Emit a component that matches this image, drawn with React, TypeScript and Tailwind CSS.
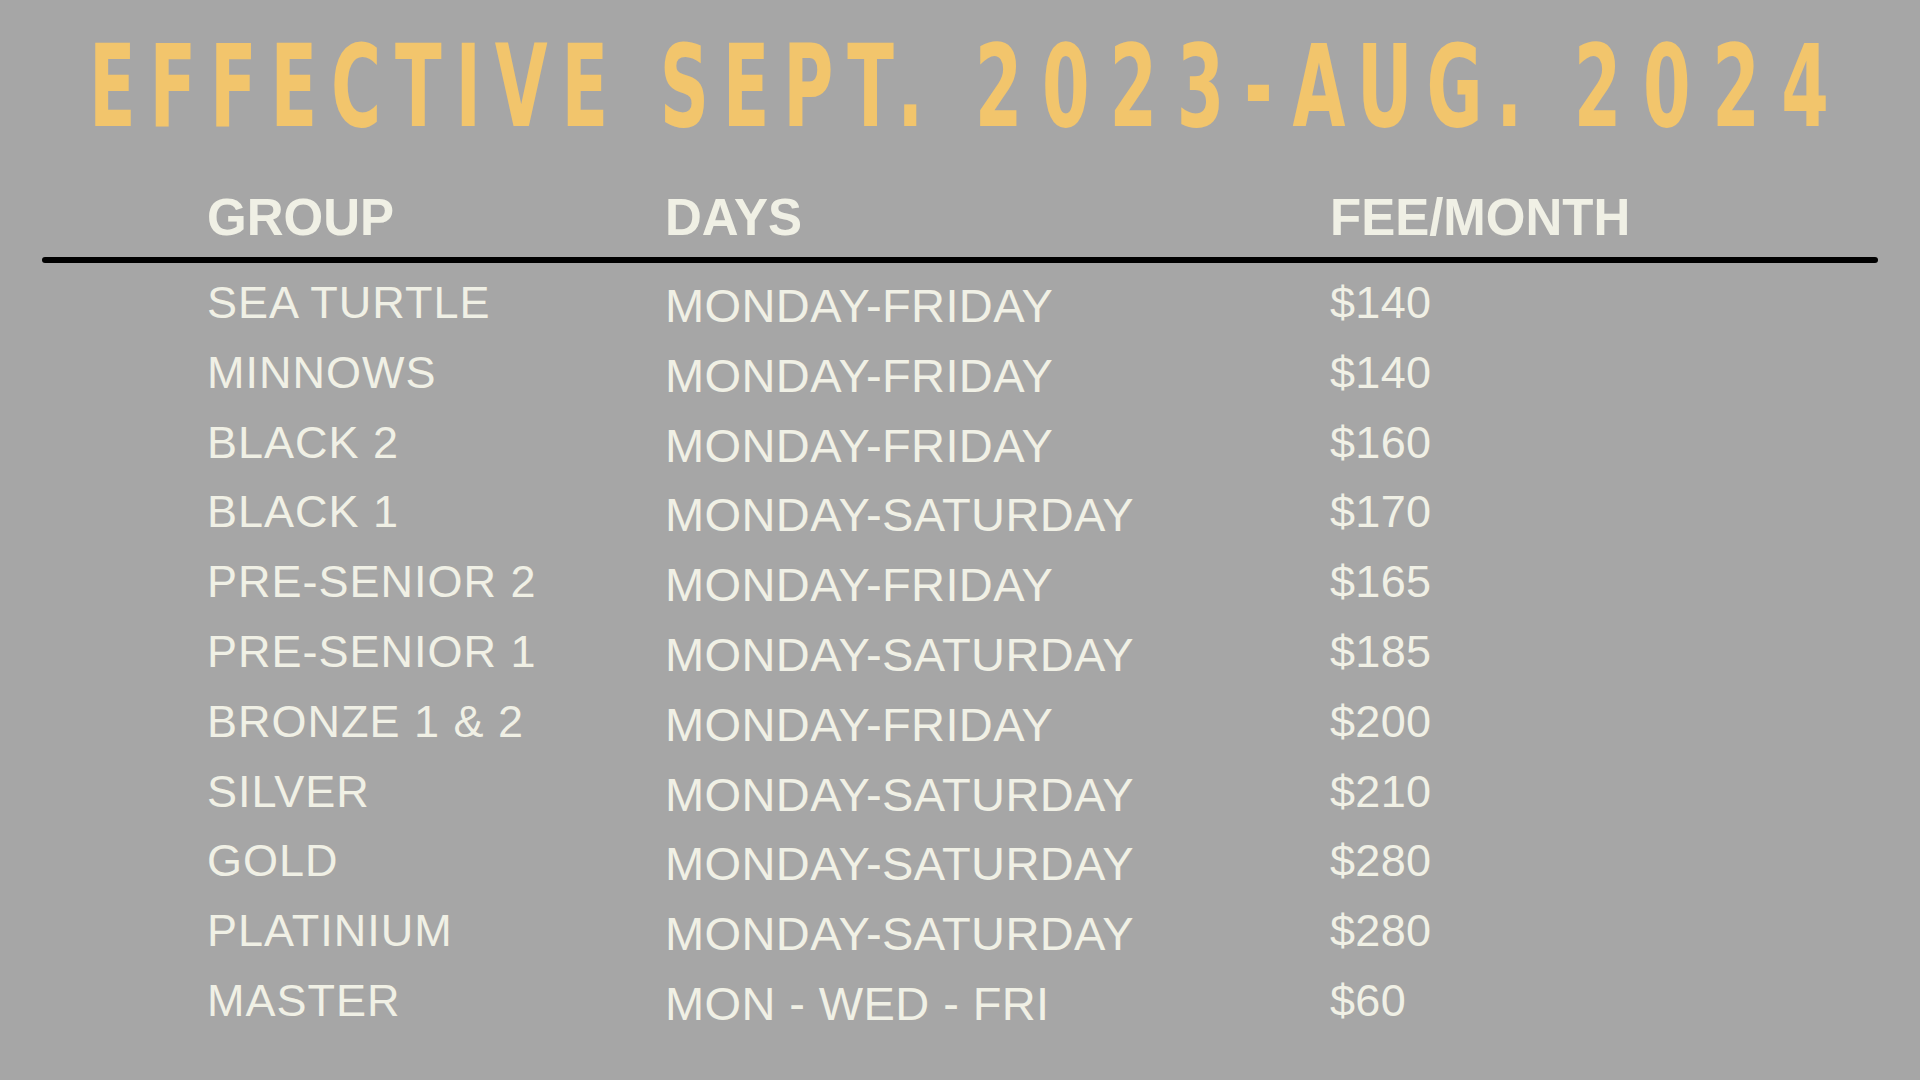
import React from "react";

const rows: [string, string, string][] = [
  ["SEA TURTLE", "MONDAY-FRIDAY", "$140"],
  ["MINNOWS", "MONDAY-FRIDAY", "$140"],
  ["BLACK 2", "MONDAY-FRIDAY", "$160"],
  ["BLACK 1", "MONDAY-SATURDAY", "$170"],
  ["PRE-SENIOR 2", "MONDAY-FRIDAY", "$165"],
  ["PRE-SENIOR 1", "MONDAY-SATURDAY", "$185"],
  ["BRONZE 1 & 2", "MONDAY-FRIDAY", "$200"],
  ["SILVER", "MONDAY-SATURDAY", "$210"],
  ["GOLD", "MONDAY-SATURDAY", "$280"],
  ["PLATINIUM", "MONDAY-SATURDAY", "$280"],
  ["MASTER", "MON - WED - FRI", "$60"],
];

export default function App() {
  return (
    <div className="w-[1920px] h-[1080px] overflow-hidden bg-[#a6a6a6] font-['Liberation_Sans',Arial,sans-serif] text-[#f0f0e5]">
      <div className="mt-[30px] h-[114px] pl-[89px] whitespace-nowrap">
        <span className="inline-block origin-left scale-x-[0.6] font-['DejaVu_Sans',sans-serif] text-[114px] leading-[114px] font-bold tracking-[23px] text-[#f2c56c]">
          EFFECTIVE SEPT. <span className="tracking-[33px]">2023-</span>AUG. <span className="tracking-[36px]">2024</span>
        </span>
      </div>

      <div className="mt-[49px] flex h-[50px] pl-[207px] text-[51px] leading-[50px] font-bold whitespace-nowrap">
        <div className="w-[458px]">GROUP</div>
        <div className="w-[665px]">DAYS</div>
        <div>FEE/MONTH</div>
      </div>

      <div className="mt-[14px] ml-[42px] h-[6px] w-[1836px] rounded-full bg-black" />

      <div className="mt-[5px] flex flex-col pl-[207px] whitespace-nowrap">
        {rows.map(([g, d, f], i) => (
          <div key={i} className="flex h-[69.8px] leading-[70px]">
            <div className="w-[458px] text-[45px] tracking-[1px]">{g}</div>
            <div className="w-[665px] pt-[3px] text-[47px] tracking-[0.4px]">{d}</div>
            <div className="text-[45px] tracking-[0.3px]">{f}</div>
          </div>
        ))}
      </div>
    </div>
  );
}
